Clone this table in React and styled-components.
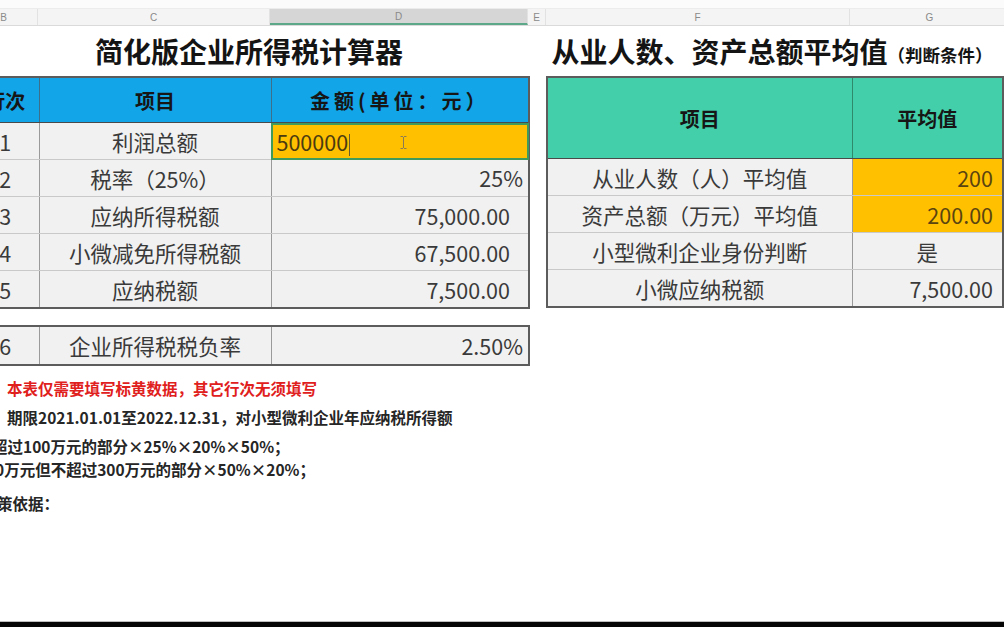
import styled, { createGlobalStyle } from "styled-components"

const GlobalStyle = createGlobalStyle`
	html, body {
		margin: 0;
		padding: 0;
		background: #fff;
	}
	body {
		font-family: "Noto Sans CJK SC", "Noto Sans", sans-serif;
		color: #333;
	}
`

const columns = [
	{ key: "B", width: 68 },
	{ key: "C", width: 232 },
	{ key: "D", width: 258, selected: true },
	{ key: "E", width: 18 },
	{ key: "F", width: 304 },
	{ key: "G", width: 160 },
]

const taxRows = [
	{ no: 1, label: "利润总额", value: "500000", input: true },
	{ no: 2, label: "税率（25%）", value: "25%", pad: 5 },
	{ no: 3, label: "应纳所得税额", value: "75,000.00" },
	{ no: 4, label: "小微减免所得税额", value: "67,500.00" },
	{ no: 5, label: "应纳税额", value: "7,500.00" },
]

const checkRows = [
	{ label: "从业人数（人）平均值", value: "200", fill: true },
	{ label: "资产总额（万元）平均值", value: "200.00", fill: true },
	{ label: "小型微利企业身份判断", value: "是", align: "center" },
	{ label: "小微应纳税额", value: "7,500.00" },
]

const notes = [
	{ text: "本表仅需要填写标黄数据，其它行次无须填写", indent: 37, top: 12, red: true },
	{ text: "期限2021.01.01至2022.12.31，对小型微利企业年应纳税所得额", indent: 37, top: 9 },
	{ text: "超过100万元的部分×25%×20%×50%；", indent: 22, top: 9 },
	{ text: "0万元但不超过300万元的部分×50%×20%；", indent: 25, top: 3 },
	{ text: "策依据：", indent: 27, top: 14 },
]

export default function App() {
	return (
		<Screen>
			<GlobalStyle />
			<Ribbon />
			<ColumnBar>
				{columns.map(col => (
					<ColumnHead key={col.key} $width={col.width} $selected={col.selected}>
						{col.key}
					</ColumnHead>
				))}
			</ColumnBar>
			<Sheet>
				<Pane $width={558}>
					<Title>简化版企业所得税计算器</Title>
					<Grid>
						<colgroup>
							<col style={{ width: 68 }} />
							<col style={{ width: 232 }} />
							<col style={{ width: 258 }} />
						</colgroup>
						<thead>
							<tr>
								<HeadCell $bg="#12a5e8" $height={44}>行次</HeadCell>
								<HeadCell $bg="#12a5e8" $height={44}>项目</HeadCell>
								<HeadCell $bg="#12a5e8" $height={44} $wide>金额(单位：元）</HeadCell>
							</tr>
						</thead>
						<tbody>
							{taxRows.map(row => (
								<tr key={row.no}>
									<Cell $align="center">{row.no}</Cell>
									<Cell $align="center">{row.label}</Cell>
									{row.input ? (
										<InputCell>
											{row.value}
											<Caret />
											<IBeam width="7" height="13" viewBox="0 0 7 13">
												<path d="M0.5 0.5h2.5M4 0.5h2.5M3.5 1v11M0.5 12.5h2.5M4 12.5h2.5" stroke="#8a7a55" strokeWidth="1" fill="none" />
											</IBeam>
										</InputCell>
									) : (
										<Cell $align="right" $pad={row.pad}>{row.value}</Cell>
									)}
								</tr>
							))}
						</tbody>
					</Grid>
					<Grid $gap={16}>
						<colgroup>
							<col style={{ width: 68 }} />
							<col style={{ width: 232 }} />
							<col style={{ width: 258 }} />
						</colgroup>
						<tbody>
							<tr>
								<Cell $align="center" $height={37}>6</Cell>
								<Cell $align="center" $height={37}>企业所得税税负率</Cell>
								<Cell $align="right" $height={37} $pad={5}>2.50%</Cell>
							</tr>
						</tbody>
					</Grid>
					<Notes>
						{notes.map(note => (
							<Note key={note.text} $indent={note.indent} $top={note.top} $red={note.red}>
								{note.text}
							</Note>
						))}
					</Notes>
				</Pane>
				<Pane $width={18} />
				<Pane $width={456}>
					<Title $shift={-4}>
						从业人数、资产总额平均值<Small>（判断条件）</Small>
					</Title>
					<Grid>
						<colgroup>
							<col style={{ width: 305 }} />
							<col style={{ width: 151 }} />
						</colgroup>
						<thead>
							<tr>
								<HeadCell $bg="#43cfa9" $height={80} $line="#2e8a6a">项目</HeadCell>
								<HeadCell $bg="#43cfa9" $height={80}>平均值</HeadCell>
							</tr>
						</thead>
						<tbody>
							{checkRows.map(row => (
								<tr key={row.label}>
									<Cell $align="center">{row.label}</Cell>
									<Cell
										$align={row.align || "right"}
										$pad={9}
										$bg={row.fill ? "#ffc000" : undefined}
										$ink={row.fill ? "#5a4410" : undefined}>
										{row.value}
									</Cell>
								</tr>
							))}
						</tbody>
					</Grid>
				</Pane>
			</Sheet>
			<BottomBar />
		</Screen>
	)
}

const Screen = styled.div`
	width: 1004px;
	height: 627px;
	overflow: hidden;
	display: flex;
	flex-direction: column;
	background: #fff;
`
const Ribbon = styled.div`
	height: 8px;
	flex-shrink: 0;
	background: #fbfbfb;
	border-bottom: 1px solid #ececec;
`
const ColumnBar = styled.div`
	display: flex;
	height: 16px;
	flex-shrink: 0;
	margin-left: -30px;
	background: #f4f4f4;
	border-bottom: 1px solid #dadada;
`
const ColumnHead = styled.div`
	width: ${p => p.$width}px;
	flex-shrink: 0;
	box-sizing: border-box;
	display: flex;
	align-items: center;
	justify-content: center;
	font-family: "Liberation Sans", sans-serif;
	font-size: 10px;
	color: #8a8a8a;
	border-right: 1px solid #e2e2e2;
	background: ${p => (p.$selected ? "#d6d6d6" : "transparent")};
	border-bottom: ${p => (p.$selected ? "2px solid #5ea88a" : "none")};
`
const Sheet = styled.div`
	display: flex;
	align-items: flex-start;
	margin-left: -30px;
	flex: 1;
`
const Pane = styled.div`
	width: ${p => p.$width}px;
	flex-shrink: 0;
	display: flex;
	flex-direction: column;
`
const Title = styled.div`
	height: 50px;
	display: flex;
	align-items: center;
	justify-content: center;
	margin-left: ${p => p.$shift || 0}px;
	font-size: 28px;
	font-weight: 700;
	color: #141414;
	white-space: nowrap;
`
const Small = styled.span`
	font-size: 17.5px;
	margin-top: 6px;
`
const Grid = styled.table`
	border-collapse: collapse;
	table-layout: fixed;
	width: 100%;
	margin-top: ${p => p.$gap || 0}px;
	border: 2px solid #5c5c5c;
`
const HeadCell = styled.th`
	height: ${p => p.$height}px;
	padding: 0;
	background: ${p => p.$bg};
	font-size: 20px;
	font-weight: 700;
	letter-spacing: ${p => (p.$wide ? 4 : 0)}px;
	color: #161616;
	border-right: 1px solid ${p => p.$line || "#3d6f8a"};
	border-bottom: 1px solid #4a4a4a;
	white-space: nowrap;
`
const Cell = styled.td`
	height: ${p => p.$height || 36}px;
	padding: 0 ${p => (p.$pad !== undefined ? p.$pad : 18)}px 0 0;
	text-align: ${p => p.$align};
	background: ${p => p.$bg || "#f1f1f1"};
	color: ${p => p.$ink || "#3a3a3a"};
	font-size: 21.5px;
	border-right: 1px solid #9a9a9a;
	border-bottom: 1px solid #c9c9c9;
	white-space: nowrap;
	${p => p.$align === "center" && "padding: 0;"}
`
const InputCell = styled.td`
	position: relative;
	height: 36px;
	padding: 0 0 0 5px;
	background: #ffc000;
	color: #4a3a10;
	font-size: 21.5px;
	outline: 2px solid #3f9a5c;
	outline-offset: -2px;
	white-space: nowrap;
`
const Caret = styled.span`
	display: inline-block;
	width: 1px;
	height: 22px;
	margin-left: 1px;
	background: #6a5a30;
	vertical-align: middle;
`
const IBeam = styled.svg`
	position: absolute;
	left: 128px;
	top: 13px;
`
const Notes = styled.div`
	display: flex;
	flex-direction: column;
`
const Note = styled.div`
	margin-top: ${p => p.$top}px;
	padding-left: ${p => p.$indent}px;
	height: 20px;
	line-height: 20px;
	font-size: 15.5px;
	font-weight: 700;
	color: ${p => (p.$red ? "#e0201c" : "#262626")};
	white-space: nowrap;
`
const BottomBar = styled.div`
	height: 5px;
	flex-shrink: 0;
	background: #050505;
	border-top: 1px solid #bdbdbd;
`
